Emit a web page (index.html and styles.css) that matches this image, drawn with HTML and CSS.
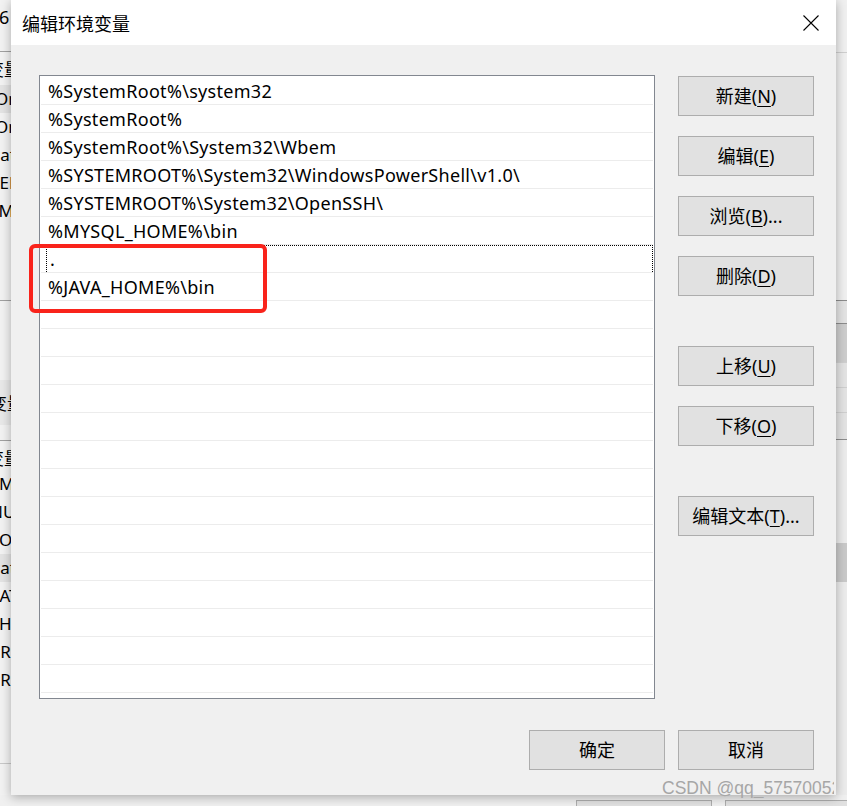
FILE: index.html
```html
<!DOCTYPE html>
<html lang="zh-CN">
<head>
<meta charset="utf-8">
<title>编辑环境变量</title>
<link rel="stylesheet" href="styles.css">
</head>
<body>
<div class="desk">
  <div class="bg-left">
    <div class="bl-cap">6</div>
    <div class="bl-line"></div>
    <div class="bl-label">变量</div>
    <div class="bl-row sel"><span class="c1">OneDrive</span></div>
    <div class="bl-row"><span class="c1">OneDriveConsumer</span></div>
    <div class="bl-row"><span class="c2">Path</span></div>
    <div class="bl-row"><span class="c2">TEMP</span></div>
    <div class="bl-row"><span class="c3">TMP</span></div>
    <div class="bl-gap"></div>
    <div class="bl-line"></div>
    <div class="bl-gap"></div>
    <div class="bl-band">变量</div>
    <div class="bl-gap"></div>
    <div class="bl-line"></div>
    <div class="bl-label">变量</div>
    <div class="bl-row"><span class="c0">MYSQL_HOME</span></div>
    <div class="bl-row"><span class="c2">NUMBER_OF_PROCESSORS</span></div>
    <div class="bl-row"><span class="c0">OS</span></div>
    <div class="bl-row sel"><span class="c2">Path</span></div>
    <div class="bl-row"><span class="c2">PATHEXT</span></div>
    <div class="bl-row"><span class="c0">HOMEPATH</span></div>
    <div class="bl-row"><span class="c2">PROCESSOR_ARCHITECTURE</span></div>
    <div class="bl-row"><span class="c2">PROCESSOR_LEVEL</span></div>
    <div class="bl-gap"></div>
    <div class="bl-line soft"></div>
    <div class="bl-gap"></div>
  </div>

  <div class="bg-right">
    <div class="br-fill"></div>
    <div class="br-line"></div>
    <div class="br-fill"></div>
    <div class="br-line dark"></div>
    <div class="br-cell"></div>
    <div class="br-line dark"></div>
    <div class="br-cell sel"></div>
    <div class="br-line"></div>
    <div class="br-cell"></div>
    <div class="br-line"></div>
    <div class="br-cell"></div>
    <div class="br-line"></div>
    <div class="br-cell"></div>
    <div class="br-line dark"></div>
    <div class="br-track"></div>
    <div class="br-thumb"></div>
    <div class="br-track"></div>
  </div>

  <div class="bg-bottom">
    <div class="ghost-btn"></div>
    <div class="ghost-btn"></div>
  </div>

  <section class="dialog">
    <header class="titlebar">
      <span class="title">编辑环境变量</span>
      <span class="close" aria-label="关闭">
        <svg width="16" height="16" viewBox="0 0 16 16"><path d="M0.5 0.5 L15.5 15.5 M15.5 0.5 L0.5 15.5" stroke="#000" stroke-width="1.1" fill="none"/></svg>
      </span>
    </header>
    <div class="body">
      <div class="main">
        <ul class="list">
          <li class="row">%SystemRoot%\system32</li>
          <li class="row">%SystemRoot%</li>
          <li class="row">%SystemRoot%\System32\Wbem</li>
          <li class="row">%SYSTEMROOT%\System32\WindowsPowerShell\v1.0\</li>
          <li class="row">%SYSTEMROOT%\System32\OpenSSH\</li>
          <li class="row">%MYSQL_HOME%\bin</li>
          <li class="row editing"><span class="edit">.</span></li>
          <li class="row">%JAVA_HOME%\bin</li>
          <li class="row"></li>
          <li class="row"></li>
          <li class="row"></li>
          <li class="row"></li>
          <li class="row"></li>
          <li class="row"></li>
          <li class="row"></li>
          <li class="row"></li>
          <li class="row"></li>
          <li class="row"></li>
          <li class="row"></li>
          <li class="row"></li>
          <li class="row"></li>
          <li class="row"></li>
        </ul>
        <div class="side">
          <button class="btn">新建(<u>N</u>)</button>
          <button class="btn">编辑(<u>E</u>)</button>
          <button class="btn">浏览(<u>B</u>)...</button>
          <button class="btn">删除(<u>D</u>)</button>
          <button class="btn far">上移(<u>U</u>)</button>
          <button class="btn">下移(<u>O</u>)</button>
          <button class="btn far">编辑文本(<u>T</u>)...</button>
        </div>
      </div>
      <div class="footer">
        <button class="btn">确定</button>
        <button class="btn">取消</button>
      </div>
    </div>
  </section>

  <div class="annot"></div>
  <div class="watermark">CSDN @qq_57570052</div>
</div>
</body>
</html>
```

FILE: styles.css
```css
* { box-sizing: border-box; margin: 0; padding: 0; }

html, body {
  width: 847px;
  height: 806px;
  overflow: hidden;
}

body {
  background: #f0f0f0;
  font-family: "Noto Sans", "Noto Sans CJK SC", sans-serif;
  color: #000;
}

.desk {
  position: relative;
  width: 847px;
  height: 806px;
  overflow: hidden;
  background: #f0f0f0;
}

/* ---------- background window, left strip ---------- */
.bg-left {
  position: absolute;
  left: 0;
  top: 0;
  width: 11px;
  height: 806px;
  overflow: hidden;
  display: grid;
  grid-template-rows: 51px 1px 33px repeat(5, 28px) 75px 1px 79px 45px 15px 1px 29px repeat(8, 28px) 69px 1px 1fr;
  background: #f2f2f2;
  font-size: 17px;
  white-space: nowrap;
}
.bg-left > div { overflow: hidden; }
.bl-cap { padding-top: 5px; line-height: 24px; margin-left: -1px; font-size: 18px; }
.bl-line { background: #a0a0a0; }
.bl-line.soft { background: #c8c8c8; }
.bl-label { line-height: 33px; text-indent: -13px; font-family: "Noto Sans CJK SC", sans-serif; }
.bl-band { background: #e8e8e8; line-height: 45px; text-indent: -10px; font-family: "Noto Sans CJK SC", sans-serif; }
.bl-row { line-height: 28px; }
.bl-row.sel { background: #e3e3e3; }
.bl-row .c0 { margin-left: -1px; }
.bl-row .c1 { margin-left: -5px; }
.bl-row .c2 { margin-left: -10px; }
.bl-row .c3 { margin-left: -11px; }

/* ---------- background window, right strip ---------- */
.bg-right {
  position: absolute;
  left: 836px;
  top: 0;
  width: 11px;
  height: 806px;
  display: grid;
  grid-template-rows: 52px 1px 247px 1px 22px 1px 38px 1px 24px 1px 24px 1px 26px 1px 103px 39px 1fr;
  background: #f0f0f0;
}
.br-fill { background: #f0f0f0; }
.br-line { background: #cfcfcf; }
.br-line.dark { background: #8c8c8c; }
.br-cell { background: #e3e3e3; }
.br-cell.sel { background: #cdcdcd; }
.br-track { background: #ececec; }
.br-thumb { background: #c9c9c9; }

/* ---------- background window, bottom strip ---------- */
.bg-bottom {
  position: absolute;
  left: 0;
  top: 795px;
  width: 847px;
  height: 11px;
  display: flex;
  gap: 13px;
  padding: 5px 0 0 576px;
  background: #f0f0f0;
}
.ghost-btn {
  flex: none;
  width: 136px;
  height: 20px;
  border: 1px solid #adadad;
  background: #e1e1e1;
}

/* ---------- dialog ---------- */
.dialog {
  position: absolute;
  left: 11px;
  top: 0;
  width: 825px;
  height: 795px;
  display: flex;
  flex-direction: column;
  background: #f0f0f0;
  box-shadow: 0 2px 10px rgba(0, 0, 0, 0.3);
}

.titlebar {
  height: 45px;
  flex: none;
  display: flex;
  align-items: center;
  background: #fff;
  padding-left: 11px;
}
.title {
  font-family: "Noto Sans CJK SC", sans-serif;
  font-size: 18px;
  line-height: 24px;
}
.close {
  margin-left: auto;
  width: 50px;
  height: 45px;
  display: flex;
  align-items: center;
  justify-content: center;
}
.close svg { display: block; }

.body {
  flex: 1;
  display: flex;
  flex-direction: column;
  padding: 30px 22px 25px 28px;
}

.main {
  display: flex;
  align-items: flex-start;
  gap: 23px;
}

.list {
  list-style: none;
  width: 616px;
  height: 624px;
  flex: none;
  border: 1px solid #828790;
  background: #fff;
  padding-top: 1px;
  overflow: hidden;
}
.row {
  height: 28px;
  margin: 0 1px;
  border-bottom: 1px solid #ececec;
  padding-left: 7px;
  font-size: 18px;
  line-height: 28px;
  letter-spacing: 0.3px;
  white-space: nowrap;
}
.row.editing { padding-left: 5px; }
.edit {
  display: block;
  height: 27px;
  border: 1px dotted #000;
  border-bottom: none;
  padding-left: 3px;
  line-height: 26px;
}

.side {
  width: 136px;
  flex: none;
  display: flex;
  flex-direction: column;
  padding-top: 1px;
}

.btn {
  width: 136px;
  height: 40px;
  flex: none;
  border: 1px solid #adadad;
  background: #e1e1e1;
  color: #000;
  font-family: "Noto Sans", "Noto Sans CJK SC", sans-serif;
  font-size: 18px;
  line-height: 24px;
  display: flex;
  align-items: center;
  justify-content: center;
  white-space: nowrap;
}
.btn u { text-decoration-thickness: 1px; text-underline-offset: 3px; }
.side .btn + .btn { margin-top: 20px; }
.side .btn.far { margin-top: 50px; }

.footer {
  display: flex;
  justify-content: flex-end;
  gap: 13px;
  margin-top: 31px;
}

/* ---------- overlays ---------- */
.annot {
  position: absolute;
  left: 29px;
  top: 244px;
  width: 238px;
  height: 69px;
  border: 4px solid #f9231b;
  border-radius: 6px;
}

.watermark {
  position: absolute;
  left: 662px;
  top: 778px;
  width: 172px;
  height: 20px;
  overflow: hidden;
  white-space: nowrap;
  font-family: "Liberation Sans", Arial, sans-serif;
  font-size: 17.5px;
  line-height: 20px;
  color: #a6a6a6;
}
```
